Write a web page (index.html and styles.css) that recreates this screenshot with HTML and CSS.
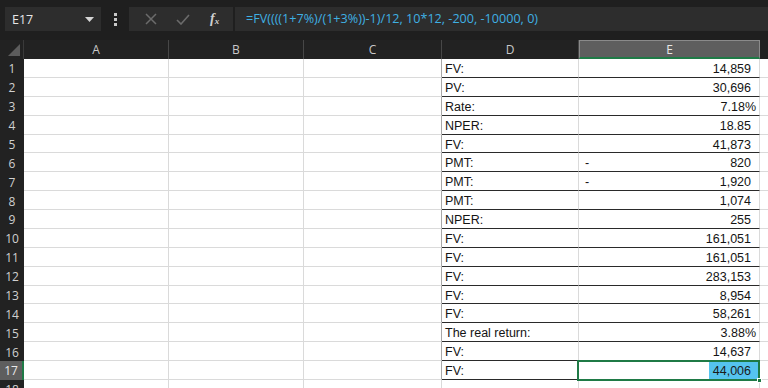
FILE: index.html
```html
<!DOCTYPE html>
<html>
<head>
<meta charset="utf-8">
<link rel="stylesheet" href="styles.css">
</head>
<body>
<div class="app">
  <div class="toolbar">
    <div class="namebox">
      <span class="ref">E17</span>
      <svg class="caret" width="9" height="5" viewBox="0 0 9 5"><path d="M0 0H9L4.5 5Z" fill="#d6d6d6"/></svg>
    </div>
    <div class="dots">
      <svg width="3" height="13" viewBox="0 0 3 13"><rect x="0" y="0" width="3" height="3" fill="#c8c8c8"/><rect x="0" y="5" width="3" height="3" fill="#c8c8c8"/><rect x="0" y="10" width="3" height="3" fill="#c8c8c8"/></svg>
    </div>
    <div class="fxbtns">
      <svg class="btn" width="12" height="12" viewBox="0 0 12 12"><path d="M1 1L11 11M11 1L1 11" stroke="#6b6b6b" stroke-width="1.5" fill="none"/></svg>
      <svg class="btn" width="14" height="11" viewBox="0 0 14 11"><path d="M1 6L5 10L13 1" stroke="#6b6b6b" stroke-width="1.6" fill="none"/></svg>
      <span class="fx">f<sub>x</sub></span>
    </div>
    <div class="formula">=FV((((1+7%)/(1+3%))-1)/12, 10*12, -200, -10000, 0)</div>
  </div>
  <div class="sheet">
    <div class="h corner"><span class="tri"></span></div>
    <div class="h col">A</div>
    <div class="h col">B</div>
    <div class="h col">C</div>
    <div class="h col">D</div>
    <div class="h col sel">E</div>
    <div class="h col last"></div>

    <div class="rh">1</div><div class="c"></div><div class="c"></div><div class="c cd"></div><div class="c d">FV:</div><div class="c e">14,859</div><div class="c f"></div>
    <div class="rh">2</div><div class="c"></div><div class="c"></div><div class="c cd"></div><div class="c d">PV:</div><div class="c e">30,696</div><div class="c f"></div>
    <div class="rh">3</div><div class="c"></div><div class="c"></div><div class="c cd"></div><div class="c d">Rate:</div><div class="c e pct">7.18%</div><div class="c f"></div>
    <div class="rh">4</div><div class="c"></div><div class="c"></div><div class="c cd"></div><div class="c d">NPER:</div><div class="c e">18.85</div><div class="c f"></div>
    <div class="rh">5</div><div class="c"></div><div class="c"></div><div class="c cd"></div><div class="c d">FV:</div><div class="c e">41,873</div><div class="c f"></div>
    <div class="rh">6</div><div class="c"></div><div class="c"></div><div class="c cd"></div><div class="c d">PMT:</div><div class="c e neg"><span>-</span><span>820</span></div><div class="c f"></div>
    <div class="rh">7</div><div class="c"></div><div class="c"></div><div class="c cd"></div><div class="c d">PMT:</div><div class="c e neg"><span>-</span><span>1,920</span></div><div class="c f"></div>
    <div class="rh">8</div><div class="c"></div><div class="c"></div><div class="c cd"></div><div class="c d">PMT:</div><div class="c e">1,074</div><div class="c f"></div>
    <div class="rh">9</div><div class="c"></div><div class="c"></div><div class="c cd"></div><div class="c d">NPER:</div><div class="c e">255</div><div class="c f"></div>
    <div class="rh">10</div><div class="c"></div><div class="c"></div><div class="c cd"></div><div class="c d">FV:</div><div class="c e">161,051</div><div class="c f"></div>
    <div class="rh">11</div><div class="c"></div><div class="c"></div><div class="c cd"></div><div class="c d">FV:</div><div class="c e">161,051</div><div class="c f"></div>
    <div class="rh">12</div><div class="c"></div><div class="c"></div><div class="c cd"></div><div class="c d">FV:</div><div class="c e">283,153</div><div class="c f"></div>
    <div class="rh">13</div><div class="c"></div><div class="c"></div><div class="c cd"></div><div class="c d">FV:</div><div class="c e">8,954</div><div class="c f"></div>
    <div class="rh">14</div><div class="c"></div><div class="c"></div><div class="c cd"></div><div class="c d">FV:</div><div class="c e">58,261</div><div class="c f"></div>
    <div class="rh">15</div><div class="c"></div><div class="c"></div><div class="c cd"></div><div class="c d">The real return:</div><div class="c e pct">3.88%</div><div class="c f"></div>
    <div class="rh">16</div><div class="c"></div><div class="c"></div><div class="c cd"></div><div class="c d">FV:</div><div class="c e">14,637</div><div class="c f"></div>
    <div class="rh rsel">17</div><div class="c"></div><div class="c"></div><div class="c cd"></div><div class="c d">FV:</div><div class="c e active"><span class="hl">44,006</span><span class="handle"></span></div><div class="c f"></div>
    <div class="rh">18</div><div class="c"></div><div class="c"></div><div class="c"></div><div class="c"></div><div class="c"></div><div class="c f"></div>
  </div>
</div>
</body>
</html>
```

FILE: styles.css
```css
* { box-sizing: border-box; }
html, body { margin: 0; padding: 0; }
body {
  background: #1f1f1f;
  width: 768px;
  height: 388px;
  overflow: hidden;
  font-family: "Liberation Sans", Arial, sans-serif;
}
.app { display: flex; flex-direction: column; height: 388px; }

.toolbar {
  height: 40px;
  display: flex;
  align-items: flex-start;
  padding: 7px 0 0 5px;
  background: #1f1f1f;
}
.namebox {
  width: 96px;
  height: 24px;
  background: #2d2d2d;
  display: flex;
  align-items: center;
  justify-content: space-between;
  padding: 0 7px 0 7px;
  color: #e6e6e6;
  font-family: "Open Sans", "Noto Sans", sans-serif;
  font-size: 12.5px;
}
.namebox .caret { margin-top: 1px; }
.dots {
  width: 28px;
  height: 24px;
  display: flex;
  align-items: center;
  justify-content: center;
}
.fxbtns {
  width: 104px;
  height: 24px;
  background: #2d2d2d;
  display: flex;
  align-items: center;
  justify-content: space-around;
  padding: 0 4px 0 6px;
  margin-right: 2px;
}
.fx {
  font-family: "Liberation Serif", serif;
  font-style: italic;
  font-weight: bold;
  color: #cfcfcf;
  font-size: 14px;
  line-height: 1;
}
.fx sub { font-size: 9px; vertical-align: -1px; }
.formula {
  flex: 1;
  height: 24px;
  background: #2d2d2d;
  color: #3fb0e3;
  font-family: "Open Sans", "Noto Sans", sans-serif;
  font-size: 12.6px;
  line-height: 24px;
  padding-left: 11px;
  white-space: nowrap;
  overflow: hidden;
}

.sheet {
  flex: 1;
  display: grid;
  grid-template-columns: 24px 145px 135px 138px 137px 181px 1fr;
  grid-template-rows: 19px repeat(18, 18.875px);
  overflow: hidden;
  background: #fff;
}
.h {
  background: #222222;
  color: #c9c9c9;
  font-family: "Open Sans", "Noto Sans", sans-serif;
  font-size: 12px;
  display: flex;
  align-items: center;
  justify-content: center;
  border-right: 1px solid #474747;
}
.corner { position: relative; border-right: 1px solid #3a3a3a; }
.tri {
  position: absolute;
  right: 3px;
  bottom: 3px;
  width: 0;
  height: 0;
  border-left: 12px solid transparent;
  border-bottom: 12px solid #5c5c5c;
}
.col.sel {
  background: #5e5e5e;
  color: #e8e8e8;
  border-left: 1px solid #8a8a8a;
  border-right: 1px solid #8a8a8a;
  border-top: 1px solid #8a8a8a;
  border-bottom: 2px solid #1f7a46;
}
.col.last { border-right: none; }

.rh {
  background: #222222;
  color: #d0d0d0;
  font-family: "Open Sans", "Noto Sans", sans-serif;
  font-size: 12px;
  display: flex;
  align-items: center;
  justify-content: center;
  padding-top: 1px;
}
.rh.rsel {
  background: #5e5e5e;
  color: #e8e8e8;
  border-right: 2px solid #1f7a46;
}

.c {
  background: #fff;
  border-right: 1px solid #dadada;
  border-bottom: 1px solid #dadada;
  font-size: 12.5px;
  color: #141414;
  line-height: 18px;
  padding-top: 1px;
  white-space: nowrap;
  overflow: hidden;
}
.c.cd { border-right: 1px solid #a8a8a8; }
.c.d {
  border-bottom: 1px solid #2a2a2a;
  padding-left: 3px;
}
.c.e {
  border-bottom: 1px solid #2a2a2a;
  text-align: right;
  padding-right: 8px;
}
.c.e.pct { padding-right: 3px; }
.c.e.neg {
  display: flex;
  justify-content: space-between;
  padding-left: 6px;
}
.c.f { border-right: none; }

.c.active {
  position: relative;
  overflow: visible;
  padding-right: 0;
}
.c.active::after {
  content: "";
  position: absolute;
  left: -2px;
  top: -1px;
  right: -1px;
  bottom: -2px;
  border: 2px solid #1f7a46;
  pointer-events: none;
}
.hl {
  display: inline-block;
  background: #55c4ef;
  color: #1b1b1b;
  padding: 0 8px 0 4px;
  height: 18px;
  line-height: 18px;
  margin-top: -1px;
}
.handle {
  position: absolute;
  right: -3px;
  bottom: -4px;
  width: 5px;
  height: 5px;
  background: #1f7a46;
  border: 1px solid #fff;
  z-index: 2;
}
```
